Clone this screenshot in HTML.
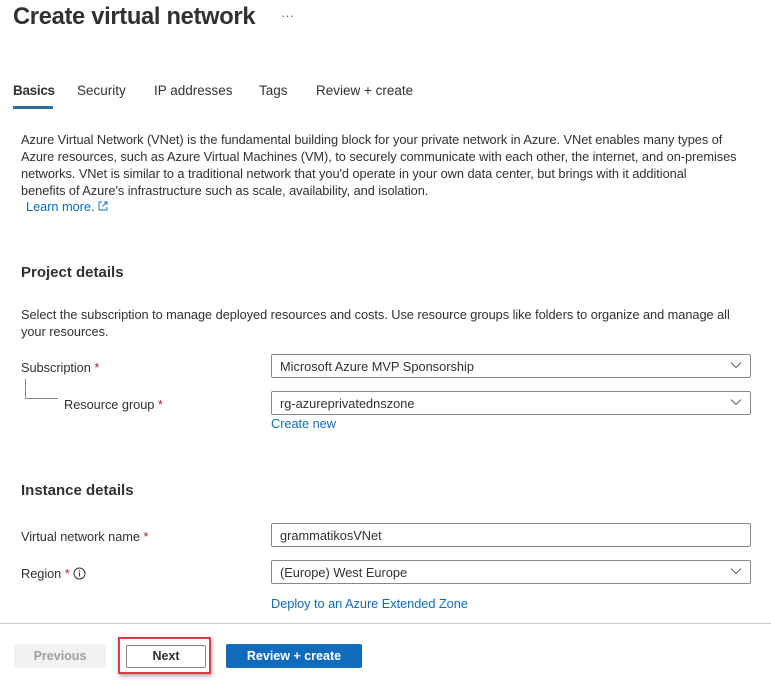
<!DOCTYPE html>
<html><head><meta charset="utf-8"><style>
*{margin:0;padding:0;box-sizing:border-box}
body{width:771px;height:689px;background:#fff;font-family:"Liberation Sans",sans-serif;color:#323130;position:relative;overflow:hidden}
.a{position:absolute;white-space:nowrap}
.t{font-size:12.8px;letter-spacing:-0.05px}
.lnk{color:#0f6cbd}
.box{position:absolute;left:271px;width:480px;height:24px;border:1px solid #8a8886;border-radius:2px;font-size:12.8px;padding:4px 8px}
.chev{position:absolute;right:8px;top:6px}
.h{font-size:15px;font-weight:bold;color:#323130}
.req{color:#a4262c}
</style></head><body>
<div class="a" style="left:13px;top:4px;font-size:23.7px;font-weight:bold;color:#323130;letter-spacing:-0.3px">Create virtual network</div>
<div class="a" style="left:281px;top:8px;font-size:13px;color:#605e5c">···</div>

<div class="a" style="left:13px;top:83px;font-size:13.5px;font-weight:bold;letter-spacing:-0.3px">Basics</div>
<div class="a" style="left:13px;top:106px;width:40px;height:3px;background:#2a6fa0"></div>
<div class="a" style="left:77px;top:83px;font-size:13.5px">Security</div>
<div class="a" style="left:154px;top:83px;font-size:13.5px">IP addresses</div>
<div class="a" style="left:259px;top:83px;font-size:13.5px">Tags</div>
<div class="a" style="left:316px;top:83px;font-size:13.5px">Review + create</div>

<div class="a t" style="left:21px;top:131px;line-height:17px">Azure Virtual Network (VNet) is the fundamental building block for your private network in Azure. VNet enables many types of<br>Azure resources, such as Azure Virtual Machines (VM), to securely communicate with each other, the internet, and on-premises<br>networks. VNet is similar to a traditional network that you'd operate in your own data center, but brings with it additional<br>benefits of Azure's infrastructure such as scale, availability, and isolation.</div>
<div class="a t lnk" style="left:26px;top:199px">Learn more. <svg width="10" height="10" viewBox="0 0 10 10" style="vertical-align:0"><path d="M4 1H1v8h8V6M6 1h3v3M9 1 4.5 5.5" fill="none" stroke="#0f6cbd" stroke-width="0.9"/></svg></div>

<div class="a h" style="left:21px;top:264px">Project details</div>
<div class="a t" style="left:21px;top:306px;line-height:17px">Select the subscription to manage deployed resources and costs. Use resource groups like folders to organize and manage all<br>your resources.</div>

<div class="a t" style="left:21px;top:360px">Subscription <span class="req">*</span></div>
<div class="box" style="top:354px">Microsoft Azure MVP Sponsorship<svg class="chev" width="12" height="8" viewBox="0 0 12 8"><path d="M1 1.5 6 6.5 11 1.5" fill="none" stroke="#605e5c"/></svg></div>
<div class="a" style="left:25px;top:379px;width:33px;height:20px;border-left:1px solid #8a8886;border-bottom:1px solid #8a8886"></div>
<div class="a t" style="left:64px;top:397px">Resource group <span class="req">*</span></div>
<div class="box" style="top:391px">rg-azureprivatednszone<svg class="chev" width="12" height="8" viewBox="0 0 12 8"><path d="M1 1.5 6 6.5 11 1.5" fill="none" stroke="#605e5c"/></svg></div>
<div class="a t lnk" style="left:271px;top:416px">Create new</div>

<div class="a h" style="left:21px;top:482px">Instance details</div>
<div class="a t" style="left:21px;top:529px">Virtual network name <span class="req">*</span></div>
<div class="box" style="top:523px">grammatikosVNet</div>
<div class="a t" style="left:21px;top:566px">Region <span class="req">*</span> <svg width="13" height="13" viewBox="0 0 13 13" style="vertical-align:-2px"><circle cx="6.5" cy="6.5" r="5.5" fill="none" stroke="#323130"/><path d="M6.5 5.5v4" stroke="#323130"/><circle cx="6.5" cy="3.8" r=".7" fill="#323130"/></svg></div>
<div class="box" style="top:560px">(Europe) West Europe<svg class="chev" width="12" height="8" viewBox="0 0 12 8"><path d="M1 1.5 6 6.5 11 1.5" fill="none" stroke="#605e5c"/></svg></div>
<div class="a t lnk" style="left:271px;top:596px">Deploy to an Azure Extended Zone</div>

<div class="a" style="left:0;top:623px;width:771px;height:1px;background:#ccc"></div>

<div class="a" style="left:14px;top:644px;width:92px;height:24px;background:#f3f2f1;color:#a19f9d;font-size:12.5px;font-weight:bold;text-align:center;line-height:24px">Previous</div>
<div class="a" style="left:118px;top:637px;width:93px;height:37px;border:2px solid #e0393e;box-shadow:1px 2px 4px rgba(0,0,0,.35)"></div>
<div class="a" style="left:126px;top:645px;width:80px;height:23px;border:1px solid #8a8886;border-radius:2px;background:#fff;font-size:12.5px;font-weight:bold;text-align:center;line-height:21px">Next</div>
<div class="a" style="left:226px;top:644px;width:136px;height:24px;background:#0f6cbd;border-radius:2px;color:#fff;font-size:12.5px;font-weight:bold;text-align:center;line-height:24px">Review + create</div>
</body></html>
